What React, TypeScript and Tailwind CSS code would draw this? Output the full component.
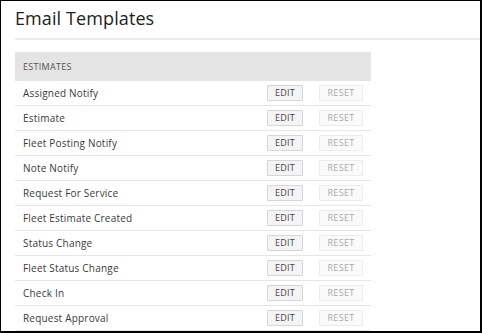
import React from "react";

const rows = [
  "Assigned Notify",
  "Estimate",
  "Fleet Posting Notify",
  "Note Notify",
  "Request For Service",
  "Fleet Estimate Created",
  "Status Change",
  "Fleet Status Change",
  "Check In",
  "Request Approval",
];

export default function App() {
  return (
    <div
      className="w-[482px] h-[333px] overflow-hidden bg-white border-l border-t border-r-2 border-b-2 border-black text-[#333]"
      style={{ fontFamily: '"Open Sans", "Noto Sans", sans-serif' }}
    >
      <div className="pl-[14px]">
        <h1 className="text-[18px] leading-[24px] pt-[5px] h-[37px] text-[#222] tracking-[0.1px]">Email Templates</h1>
        <div className="h-[2px] bg-[#ececec]" />
        <div className="w-[356px] mt-[12px]">
          <div className="h-[29px] bg-[#e4e4e4] flex items-center pl-[8px] text-[9px] text-[#555] tracking-[0.3px]">
            ESTIMATES
          </div>
          {rows.map((r) => (
            <div key={r} className="h-[25px] flex items-center border-b border-[#e6e6e6] pl-[8px]">
              <div className="flex-1 text-[10px] text-[#3a3a3a] tracking-[0.2px]">{r}</div>
              <button className="w-[36px] h-[16px] border border-[#d6d6d6] bg-[#f4f4f4] text-[9px] text-[#444] tracking-[0.3px] flex items-center justify-center rounded-[1px]">
                EDIT
              </button>
              <button className="w-[44px] h-[16px] ml-[16px] mr-[8px] border border-[#ececec] bg-[#fafafa] text-[9px] text-[#aaa] tracking-[0.3px] flex items-center justify-center rounded-[1px]">
                RESET
              </button>
            </div>
          ))}
        </div>
      </div>
    </div>
  );
}
